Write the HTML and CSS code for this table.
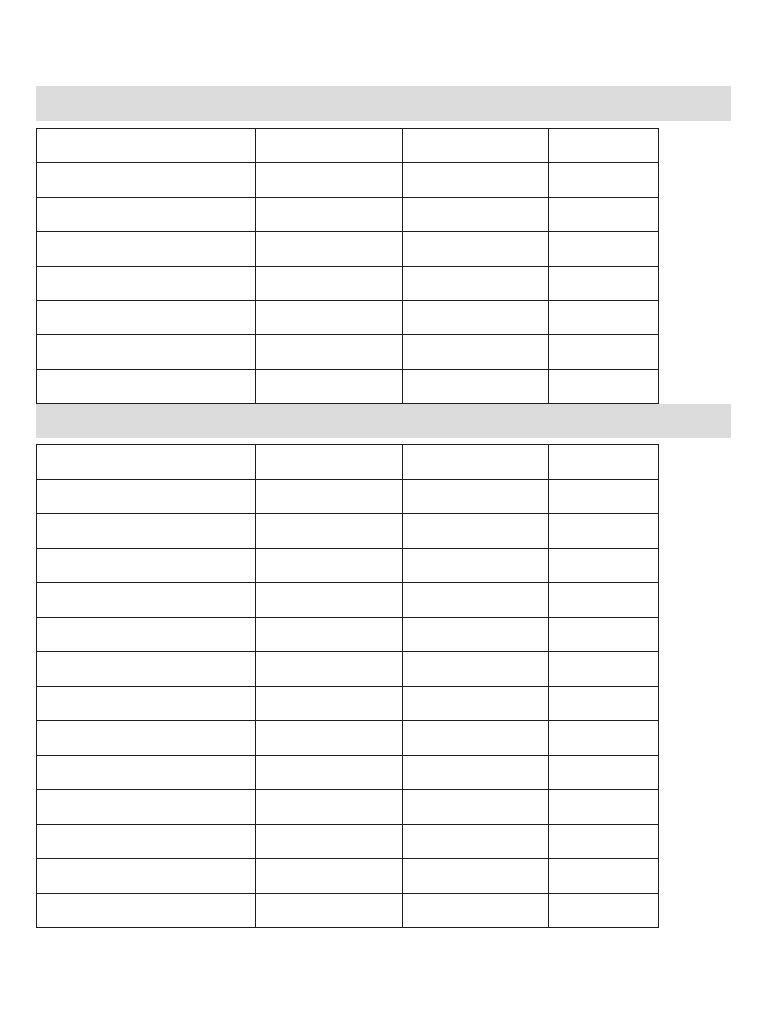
FILE: index.html
```html
<!DOCTYPE html>
<html>
<head>
<meta charset="utf-8">
<link rel="stylesheet" href="styles.css">
</head>
<body>
<div class="page">
  <div class="bar bar-first"></div>
  <table class="grid">
    <colgroup><col class="c1"><col class="c2"><col class="c3"><col class="c4"></colgroup>
    <tbody>
      <tr><td></td><td></td><td></td><td></td></tr>
      <tr><td></td><td></td><td></td><td></td></tr>
      <tr><td></td><td></td><td></td><td></td></tr>
      <tr><td></td><td></td><td></td><td></td></tr>
      <tr><td></td><td></td><td></td><td></td></tr>
      <tr><td></td><td></td><td></td><td></td></tr>
      <tr><td></td><td></td><td></td><td></td></tr>
      <tr><td></td><td></td><td></td><td></td></tr>
    </tbody>
  </table>
  <div class="bar bar-second"></div>
  <table class="grid grid-second">
    <colgroup><col class="c1"><col class="c2"><col class="c3"><col class="c4"></colgroup>
    <tbody>
      <tr><td></td><td></td><td></td><td></td></tr>
      <tr><td></td><td></td><td></td><td></td></tr>
      <tr><td></td><td></td><td></td><td></td></tr>
      <tr><td></td><td></td><td></td><td></td></tr>
      <tr><td></td><td></td><td></td><td></td></tr>
      <tr><td></td><td></td><td></td><td></td></tr>
      <tr><td></td><td></td><td></td><td></td></tr>
      <tr><td></td><td></td><td></td><td></td></tr>
      <tr><td></td><td></td><td></td><td></td></tr>
      <tr><td></td><td></td><td></td><td></td></tr>
      <tr><td></td><td></td><td></td><td></td></tr>
      <tr><td></td><td></td><td></td><td></td></tr>
      <tr><td></td><td></td><td></td><td></td></tr>
      <tr><td></td><td></td><td></td><td></td></tr>
    </tbody>
  </table>
</div>
</body>
</html>
```
FILE: styles.css
```css
html, body {
  margin: 0;
  padding: 0;
  background: #ffffff;
  font-family: "Liberation Sans", Arial, sans-serif;
}
.page {
  display: flex;
  flex-direction: column;
  align-items: flex-start;
  padding: 86px 37px 0 36px;
}
.bar {
  width: 695px;
  height: 35px;
  background: #dcdcdc;
}
.bar-first {
  margin-bottom: 7px;
}
.bar-second {
  margin-top: 0;
  height: 34px;
  margin-bottom: 6px;
}
.grid {
  border-collapse: collapse;
  table-layout: fixed;
  width: 622px;
}
.grid td {
  border: 1px solid #1e1e1e;
  height: 33.4px;
  padding: 0;
}
.grid-second td {
  height: 33.5px;
}
.c1 { width: 219px; }
.c2 { width: 147px; }
.c3 { width: 146px; }
.c4 { width: 110px; }
```
